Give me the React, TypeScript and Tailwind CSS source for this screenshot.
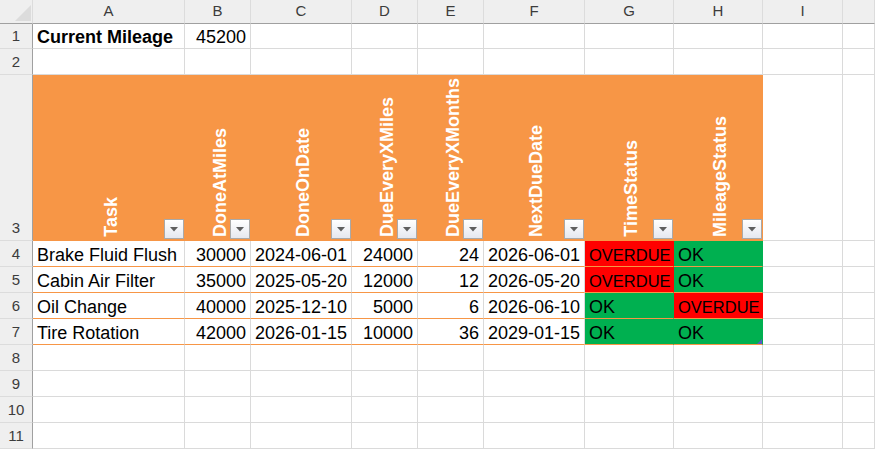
import React from 'react';

type Row = {
  task: string;
  miles: number;
  date: string;
  everyMiles: number;
  everyMonths: number;
  next: string;
  time: string;
  mileage: string;
};

const rows: Row[] = [
  { task: 'Brake Fluid Flush', miles: 30000, date: '2024-06-01', everyMiles: 24000, everyMonths: 24, next: '2026-06-01', time: 'OVERDUE', mileage: 'OK' },
  { task: 'Cabin Air Filter', miles: 35000, date: '2025-05-20', everyMiles: 12000, everyMonths: 12, next: '2026-05-20', time: 'OVERDUE', mileage: 'OK' },
  { task: 'Oil Change', miles: 40000, date: '2025-12-10', everyMiles: 5000, everyMonths: 6, next: '2026-06-10', time: 'OK', mileage: 'OVERDUE' },
  { task: 'Tire Rotation', miles: 42000, date: '2026-01-15', everyMiles: 10000, everyMonths: 36, next: '2029-01-15', time: 'OK', mileage: 'OK' },
];

const headers = ['Task', 'DoneAtMiles', 'DoneOnDate', 'DueEveryXMiles', 'DueEveryXMonths', 'NextDueDate', 'TimeStatus', 'MileageStatus'];
const letters = ['A', 'B', 'C', 'D', 'E', 'F', 'G', 'H', 'I', ''];

const FilterButton = () => (
  <div className="absolute right-0 bottom-[1px] w-5 h-5 border border-[#a9a9a9] bg-gradient-to-b from-white to-[#e6e8ef] flex items-center justify-center">
    <svg width="8" height="5" viewBox="0 0 8 5">
      <polygon points="0,0 8,0 4,4.5" fill="#5f5f5f" />
    </svg>
  </div>
);

const RowNum = ({ n }: { n: number }) => (
  <div className="flex items-end justify-center pb-[2px] bg-[#efefef] border-r border-r-[#a0a0a0] border-b border-b-[#dcdcdc] text-[15px] leading-[20px] text-[#3c3c3c]">
    {n}
  </div>
);

const Blank = ({ n }: { n: number }) => (
  <>
    {Array.from({ length: n }).map((_, i) => (
      <div key={i} className="border-r border-b border-[#dadada] bg-white" />
    ))}
  </>
);

const text = 'flex items-end px-1 pb-[1px] leading-[20px] whitespace-nowrap overflow-hidden';
const dataCell = `${text} bg-white border-r border-r-[#dadada] border-b border-b-[#f79646]`;

const Status = ({ v, last }: { v: string; last?: boolean }) => (
  <div
    className={`${text} relative border-b border-b-[#f79646] border-r ${
      v === 'OVERDUE' ? 'bg-[#ff0000] border-r-[#ff0000] text-[16.5px]' : 'bg-[#00b050] border-r-[#00b050]'
    }`}
  >
    {v}
    {last && (
      <svg className="absolute right-0 bottom-0" width="5" height="5" viewBox="0 0 5 5">
        <polygon points="5,0 5,5 0,5" fill="#5b5bc4" />
      </svg>
    )}
  </div>
);

export default function App() {
  return (
    <div className="w-[875px] h-[450px] overflow-hidden bg-white font-['Liberation_Sans',Arial,sans-serif] text-[18px] text-black">
      <div className="grid grid-cols-[33px_152px_66px_101px_66px_66px_101px_89px_89px_80px_1fr] grid-rows-[24px_25px_26px_166px_26px_26px_26px_26px_26px_26px_26px_26px]">
        {/* column letters */}
        <div className="flex items-end justify-end pr-[1px] pb-[2px] bg-[#efefef] border-r border-r-[#dcdcdc] border-b border-b-[#a0a0a0]">
          <svg width="16" height="16" viewBox="0 0 16 16">
            <polygon points="16,0 16,16 0,16" fill="#dcdcdc" />
          </svg>
        </div>
        {letters.map((l, i) => (
          <div
            key={i}
            className="flex items-end justify-center pb-[3px] bg-[#efefef] border-r border-r-[#dcdcdc] border-b border-b-[#a0a0a0] text-[15px] leading-[18px] text-[#3c3c3c]"
          >
            {l}
          </div>
        ))}

        {/* row 1 */}
        <RowNum n={1} />
        <div className={`${text} font-bold bg-white border-r border-b border-[#dadada]`}>Current Mileage</div>
        <div className={`${text} justify-end bg-white border-r border-b border-[#dadada]`}>45200</div>
        <Blank n={8} />

        {/* row 2 */}
        <RowNum n={2} />
        <Blank n={10} />

        {/* row 3 headers */}
        <RowNum n={3} />
        {headers.map(h => (
          <div key={h} className="relative flex flex-col justify-end items-center pb-[3px] bg-[#f79646] border-r border-b border-[#f79646]">
            <span className="[writing-mode:vertical-rl] rotate-180 font-bold text-white leading-[20px] translate-x-[2px] whitespace-nowrap">
              {h}
            </span>
            <FilterButton />
          </div>
        ))}
        <Blank n={2} />

        {/* data rows */}
        {rows.map((r, i) => (
          <React.Fragment key={r.task}>
            <RowNum n={i + 4} />
            <div className={dataCell}>{r.task}</div>
            <div className={`${dataCell} justify-end`}>{r.miles}</div>
            <div className={`${dataCell} justify-end`}>{r.date}</div>
            <div className={`${dataCell} justify-end`}>{r.everyMiles}</div>
            <div className={`${dataCell} justify-end`}>{r.everyMonths}</div>
            <div className={`${dataCell} justify-end`}>{r.next}</div>
            <Status v={r.time} />
            <Status v={r.mileage} last={i === rows.length - 1} />
            <Blank n={2} />
          </React.Fragment>
        ))}

        {[8, 9, 10, 11].map(n => (
          <React.Fragment key={n}>
            <RowNum n={n} />
            <Blank n={10} />
          </React.Fragment>
        ))}
      </div>
    </div>
  );
}
